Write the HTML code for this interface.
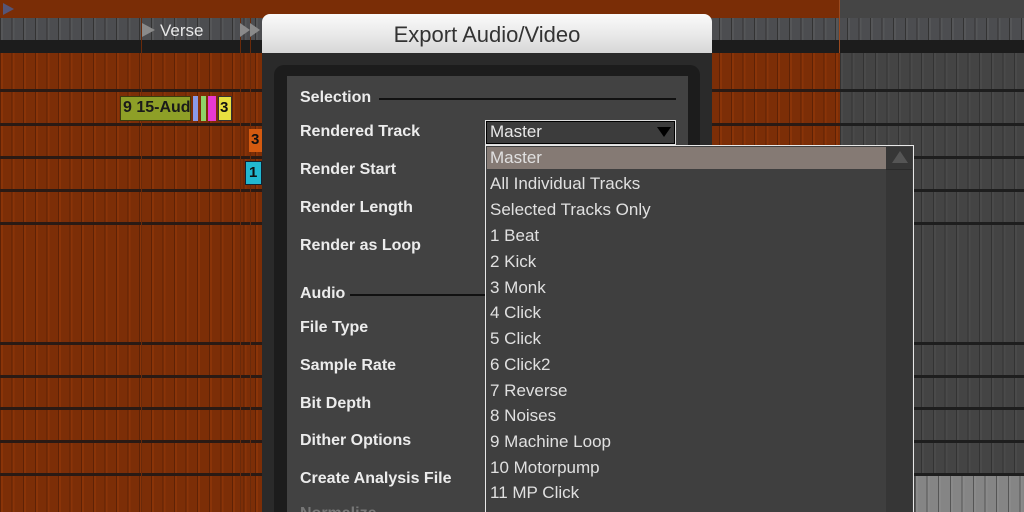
<!DOCTYPE html>
<html><head><style>
*{margin:0;padding:0;box-sizing:border-box}
html,body{width:1024px;height:512px;overflow:hidden}
body{position:relative;background:#454545;font-family:"Liberation Sans",sans-serif}
.a{position:absolute}
.orgcols{background:repeating-linear-gradient(90deg,#5e2206 0 1px,#8a3408 1px 3px,#7c2e07 3px 11.6px)}
.graycols{background:repeating-linear-gradient(90deg,#333 0 1px,#4a4a4a 1px 3px,#444 3px 11.6px)}
.ruler{background:repeating-linear-gradient(90deg,#333 0 1px,#555658 1px 3px,#4c4d50 3px 11.6px)}
.sep{height:3px;background:#2a1a14}
.gsep{height:3px;background:#1e1e1e}
.lbl{position:absolute;left:300px;color:#ececec;font-weight:bold;font-size:16px}
.it{position:absolute;left:490px;color:#e0e0e0;font-size:17px}
</style></head><body>
<div class="a" style="left:0;top:0;width:840px;height:18px;background:#7a2d06"></div>
<div class="a" style="left:840px;top:0;width:184px;height:18px;background:#454545"></div>
<div class="a ruler" style="left:0;top:18px;width:1024px;height:22px"></div>
<div class="a" style="left:0;top:40px;width:1024px;height:13px;background:#1c1c1c"></div>
<div class="a orgcols" style="left:0;top:53px;width:840px;height:459px"></div>
<div class="a graycols" style="left:840px;top:53px;width:184px;height:459px"></div>
<div class="a" style="left:915px;top:475px;width:109px;height:37px;background:repeating-linear-gradient(90deg,#555 0 1px,#8a8a8a 1px 3px,#858585 3px 11.6px)"></div>
<div class="a sep" style="left:0;top:89px;width:840px"></div>
<div class="a sep" style="left:0;top:123px;width:840px"></div>
<div class="a sep" style="left:0;top:156px;width:840px"></div>
<div class="a sep" style="left:0;top:189px;width:840px"></div>
<div class="a sep" style="left:0;top:222px;width:840px"></div>
<div class="a sep" style="left:0;top:342px;width:262px"></div>
<div class="a sep" style="left:0;top:375px;width:262px"></div>
<div class="a sep" style="left:0;top:407px;width:262px"></div>
<div class="a sep" style="left:0;top:440px;width:262px"></div>
<div class="a sep" style="left:0;top:473px;width:262px"></div>
<div class="a gsep" style="left:840px;top:89px;width:184px"></div>
<div class="a gsep" style="left:840px;top:123px;width:184px"></div>
<div class="a gsep" style="left:913px;top:156px;width:111px"></div>
<div class="a gsep" style="left:913px;top:189px;width:111px"></div>
<div class="a gsep" style="left:913px;top:222px;width:111px"></div>
<div class="a gsep" style="left:913px;top:342px;width:111px"></div>
<div class="a gsep" style="left:913px;top:375px;width:111px"></div>
<div class="a gsep" style="left:913px;top:407px;width:111px"></div>
<div class="a gsep" style="left:913px;top:440px;width:111px"></div>
<div class="a gsep" style="left:913px;top:473px;width:111px"></div>
<div class="a" style="left:141px;top:18px;width:1px;height:494px;background:#6a2a0a"></div>
<div class="a" style="left:240px;top:18px;width:1px;height:494px;background:#6a2a0a"></div>
<div class="a" style="left:250px;top:18px;width:1px;height:494px;background:#6a2a0a"></div>
<div class="a" style="left:839px;top:0;width:1px;height:53px;background:#9a4a20"></div>
<div class="a" style="left:142px;top:23px;width:0;height:0;border-left:13px solid #8a8a8a;border-top:7px solid transparent;border-bottom:7px solid transparent"></div>
<div class="a" style="left:240px;top:23px;width:0;height:0;border-left:10px solid #8a8a8a;border-top:7px solid transparent;border-bottom:7px solid transparent"></div>
<div class="a" style="left:250px;top:23px;width:0;height:0;border-left:10px solid #8a8a8a;border-top:7px solid transparent;border-bottom:7px solid transparent"></div>
<div class="a" style="left:3px;top:3px;width:0;height:0;border-left:11px solid #557;border-top:6px solid transparent;border-bottom:6px solid transparent"></div>
<div class="a" style="left:160px;top:21px;color:#e8e8e8;font-size:17px">Verse</div>
<div class="a" style="left:120px;top:96px;width:71px;height:25px;background:#8e9f27;border:1px solid #3a3a10;font-weight:bold;font-size:16px;color:#1a1a1a;padding:2px 0 0 2px;white-space:nowrap;overflow:hidden">9 15-Aud</div>
<div class="a" style="left:193px;top:96px;width:5px;height:25px;background:#8a9ae8"></div>
<div class="a" style="left:201px;top:96px;width:5px;height:25px;background:#8ed468"></div>
<div class="a" style="left:208px;top:96px;width:8px;height:25px;background:#e83ad0"></div>
<div class="a" style="left:218px;top:96px;width:14px;height:25px;background:#e8e040;border:1px solid #333;font-weight:bold;font-size:15px;color:#111;padding:2px 0 0 1px">3</div>
<div class="a" style="left:249px;top:129px;width:13px;height:23px;background:#d45a10;font-weight:bold;font-size:15px;color:#111;padding:2px 0 0 2px">3</div>
<div class="a" style="left:245px;top:161px;width:17px;height:24px;background:#22b8d0;border:1px solid #123;font-weight:bold;font-size:15px;color:#111;padding:2px 0 0 3px">1</div>
<div class="a" style="left:262px;top:14px;width:450px;height:40px;border-radius:8px 8px 0 0;background:linear-gradient(#fafafa,#e6e6e6 60%,#d6d6d6);text-align:center;font-size:22px;color:#333;padding-top:8px">Export Audio/Video</div>
<div class="a" style="left:262px;top:53px;width:450px;height:459px;background:#2a2a2a"></div>
<div class="a" style="left:274px;top:65px;width:426px;height:460px;border-radius:10px;background:#1c1c1c"></div>
<div class="a" style="left:287px;top:76px;width:401px;height:440px;background:#424242"></div>
<div class="lbl" style="top:89px">Selection</div>
<div class="a" style="left:379px;top:98px;width:297px;height:2px;background:#111"></div>
<div class="lbl" style="top:123px">Rendered Track</div>
<div class="lbl" style="top:161px">Render Start</div>
<div class="lbl" style="top:199px">Render Length</div>
<div class="lbl" style="top:237px">Render as Loop</div>
<div class="lbl" style="top:285px">Audio</div>
<div class="a" style="left:350px;top:294px;width:140px;height:2px;background:#111"></div>
<div class="lbl" style="top:319px">File Type</div>
<div class="lbl" style="top:357px">Sample Rate</div>
<div class="lbl" style="top:395px">Bit Depth</div>
<div class="lbl" style="top:432px">Dither Options</div>
<div class="lbl" style="top:470px">Create Analysis File</div>
<div class="lbl" style="top:505px;color:#777">Normalize</div>
<div class="a" style="left:485px;top:120px;width:191px;height:25px;background:#3c3c3c;border:1px solid #ddd;box-shadow:inset 0 0 0 1px #000"></div>
<div class="a" style="left:490px;top:122px;color:#e8e8e8;font-size:17px">Master</div>
<div class="a" style="left:657px;top:127px;width:0;height:0;border-top:10px solid #000;border-left:7px solid transparent;border-right:7px solid transparent"></div>
<div class="a" style="left:485px;top:145px;width:429px;height:380px;background:#3f3f3f;border:1px solid #e8e8e8"></div>
<div class="a" style="left:487px;top:147px;width:399px;height:22px;background:#857a74"></div>
<div class="a" style="left:886px;top:147px;width:26px;height:370px;background:#363636"></div>
<div class="a" style="left:892px;top:151px;width:0;height:0;border-bottom:12px solid #555;border-left:8px solid transparent;border-right:8px solid transparent"></div>
<div class="a" style="left:886px;top:169px;width:26px;height:1px;background:#2a2a2a"></div>
<div class="it" style="top:148px">Master</div>
<div class="it" style="top:174px">All Individual Tracks</div>
<div class="it" style="top:200px">Selected Tracks Only</div>
<div class="it" style="top:226px">1 Beat</div>
<div class="it" style="top:252px">2 Kick</div>
<div class="it" style="top:278px">3 Monk</div>
<div class="it" style="top:303px">4 Click</div>
<div class="it" style="top:329px">5 Click</div>
<div class="it" style="top:355px">6 Click2</div>
<div class="it" style="top:381px">7 Reverse</div>
<div class="it" style="top:406px">8 Noises</div>
<div class="it" style="top:432px">9 Machine Loop</div>
<div class="it" style="top:458px">10 Motorpump</div>
<div class="it" style="top:483px">11 MP Click</div>
</body></html>
